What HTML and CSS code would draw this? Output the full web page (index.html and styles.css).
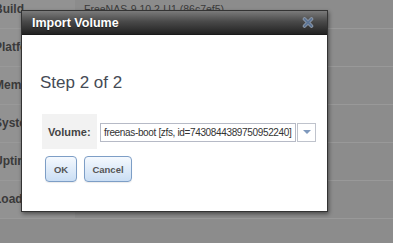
FILE: index.html
```html
<!DOCTYPE html>
<html>
<head>
<meta charset="utf-8">
<link rel="stylesheet" href="styles.css">
</head>
<body>
<div class="page">
  <div class="info-row first"><div class="label">Build</div><div class="value">FreeNAS-9.10.2-U1 (86c7ef5)</div></div>
  <div class="info-row"><div class="label">Platform</div><div class="value"></div></div>
  <div class="info-row"><div class="label">Memory</div><div class="value"></div></div>
  <div class="info-row"><div class="label">System Time</div><div class="value"></div></div>
  <div class="info-row"><div class="label">Uptime</div><div class="value"></div></div>
  <div class="info-row"><div class="label">Load Average</div><div class="value"></div></div>
</div>

<div class="dialog">
  <div class="titlebar">
    <span class="title">Import Volume</span>
    <svg class="close" width="12" height="11" viewBox="0 0 12 11">
      <path d="M2.5 2 L9.5 9 M9.5 2 L2.5 9" stroke="#8e99a8" stroke-width="3.6" stroke-linecap="round"/>
      <path d="M2.5 2 L9.5 9 M9.5 2 L2.5 9" stroke="#5d7596" stroke-width="1.8" stroke-linecap="round"/>
    </svg>
  </div>
  <div class="body">
    <h2 class="step">Step 2 of 2</h2>
    <div class="form-row">
      <div class="field-label">Volume:</div>
      <div class="select">
        <div class="select-text">freenas-boot [zfs, id=7430844389750952240]</div>
        <div class="select-arrow"><span class="tri"></span></div>
      </div>
    </div>
    <div class="buttons">
      <button class="btn ok">OK</button>
      <button class="btn cancel">Cancel</button>
    </div>
  </div>
</div>
</body>
</html>
```
FILE: styles.css
```css
html, body {
  margin: 0;
  padding: 0;
}
body {
  width: 393px;
  height: 243px;
  overflow: hidden;
  background: #8c8c8c;
  font-family: "Liberation Sans", Arial, sans-serif;
  position: relative;
}
.page {
  margin-top: -9px;
  margin-left: -6px;
}
.info-row {
  display: flex;
  height: 37px;
  border-bottom: 1px solid #999999;
}
.info-row .label {
  width: 81px;
  background: #929292;
  color: #3a3a3a;
  font-weight: bold;
  font-size: 12px;
  line-height: 37px;
  white-space: nowrap;
  overflow: hidden;
}
.info-row .value {
  flex: 1;
  padding-left: 9px;
  color: #3a3a3a;
  font-size: 10.5px;
  line-height: 37px;
  white-space: nowrap;
}
.dialog {
  position: absolute;
  left: 21px;
  top: 10px;
  width: 305px;
  height: 200px;
  border: 1px solid #333333;
  background: #ffffff;
  box-shadow: 1px 2px 4px rgba(0,0,0,0.45);
}
.titlebar {
  height: 23px;
  background: linear-gradient(#7b7b7b, #4a4a4a 45%, #222222);
  display: flex;
  align-items: center;
  justify-content: space-between;
  padding: 0 13px 0 10px;
  border-bottom: 1px solid #1a1a1a;
}
.title {
  color: #ffffff;
  font-weight: bold;
  font-size: 12.5px;
  text-shadow: 0 1px 1px rgba(0,0,0,0.4);
}
.close {
  display: block;
}
.body {
  padding: 0 0 0 20px;
}
.step {
  margin: 38px 0 0 -2px;
  font-size: 17px;
  font-weight: normal;
  line-height: 20px;
  color: #454b55;
}
.form-row {
  display: flex;
  align-items: center;
  margin-top: 21px;
}
.field-label {
  width: 49px;
  height: 35px;
  padding-left: 6px;
  background: #f2f2f2;
  color: #444444;
  font-weight: bold;
  font-size: 11px;
  line-height: 36px;
}
.select {
  display: flex;
  margin-left: 3px;
  margin-top: 1px;
}
.select-text {
  width: 191px;
  height: 17px;
  border: 1px solid #b6bac6;
  padding-left: 3px;
  font-size: 10px;
  letter-spacing: -0.35px;
  line-height: 17px;
  color: #333333;
  white-space: nowrap;
  overflow: hidden;
}
.select-arrow {
  width: 17px;
  height: 17px;
  margin-left: 1px;
  border: 1px solid #bfc3cc;
  display: flex;
  align-items: center;
  justify-content: center;
}
.tri {
  width: 0;
  height: 0;
  border-left: 4px solid transparent;
  border-right: 4px solid transparent;
  border-top: 4px solid #7f99bd;
}
.buttons {
  display: flex;
  gap: 7px;
  margin-top: 7px;
  padding-left: 3px;
}
.btn {
  height: 26px;
  border: 1px solid #7d9ec6;
  border-radius: 4px;
  background: linear-gradient(#f5f9fe, #cadef4);
  font-family: "Liberation Sans", Arial, sans-serif;
  font-weight: bold;
  font-size: 9.5px;
  color: #555555;
  padding: 0;
  box-shadow: 0 1px 1px rgba(0,0,0,0.08);
}
.ok { width: 32px; }
.cancel { width: 48px; }
```
